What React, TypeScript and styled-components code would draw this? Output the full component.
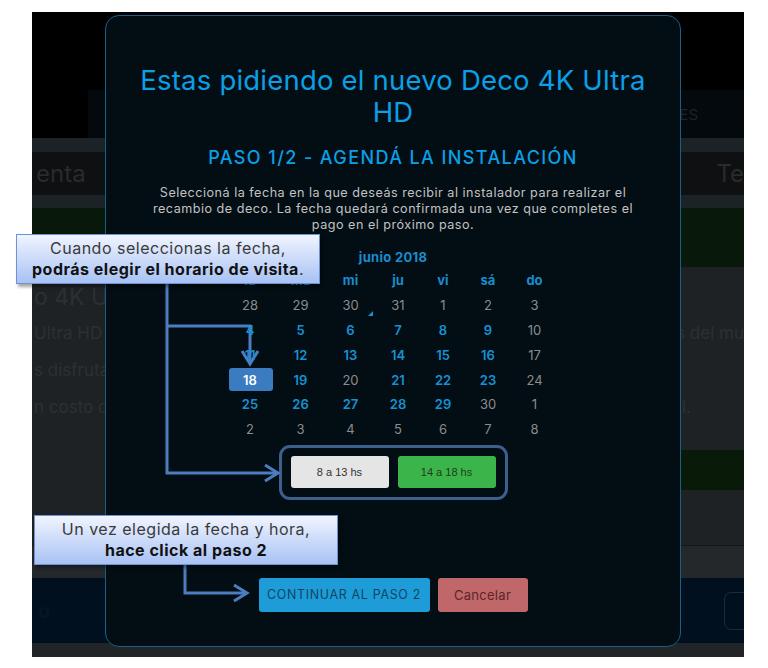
import styled, { createGlobalStyle } from "styled-components";

const GlobalStyle = createGlobalStyle`
  html, body {
    margin: 0;
    padding: 0;
    background: #ffffff;
  }
  body {
    font-family: Inter, "DejaVu Sans", sans-serif;
  }
`;

const Page = styled.div`
  position: relative;
  width: 768px;
  height: 668px;
  box-sizing: border-box;
  padding: 12px 0 0 32px;
  overflow: hidden;
  background: #ffffff;
`;

const Frame = styled.div`
  position: relative;
  width: 712px;
  height: 645px;
  display: flex;
  flex-direction: column;
  background: #000;
  overflow: hidden;
`;

const TopBar = styled.div`
  height: 78px;
  background: #000;
`;

const NavBar = styled.div`
  height: 48px;
  display: flex;
  padding-left: 56px;
  background: #000;
`;

const NavInner = styled.div`
  flex: 1;
  display: flex;
  align-items: center;
  justify-content: flex-end;
  padding-right: 46px;
  background: #03090c;
  color: #1c2326;
  font-size: 15px;
`;

const Band = styled.div<{ $h: number; $bg: string }>`
  height: ${(p) => p.$h}px;
  flex-shrink: 0;
  background: ${(p) => p.$bg};
`;

const TabBar = styled.div`
  height: 43px;
  display: flex;
  align-items: center;
  justify-content: space-between;
  padding: 0 0 0 4px;
  background: #0e1012;
  color: #282c2e;
  font-size: 24px;
  white-space: nowrap;
`;

const Promo = styled.div`
  height: 59px;
  display: flex;
  align-items: flex-end;
  padding-left: 8px;
  background: #08180a;
  color: #1b291a;
  font-size: 24px;
  font-weight: 700;
`;

const Content = styled.div`
  height: 278px;
  box-sizing: border-box;
  padding-top: 12px;
  background: #1f2225;
  color: #2c3032;
`;

const ContentLine = styled.div<{ $big?: boolean }>`
  display: flex;
  justify-content: space-between;
  height: ${(p) => (p.$big ? 36 : 37)}px;
  line-height: ${(p) => (p.$big ? 36 : 37)}px;
  font-size: ${(p) => (p.$big ? 23 : 17)}px;
  padding-left: 2px;
  white-space: nowrap;
`;

const RightText = styled.span<{ $pad: number }>`
  padding-right: ${(p) => p.$pad}px;
`;

const GreenStrip = styled.div`
  margin: 24px 0 0 auto;
  width: 320px;
  height: 40px;
  background: #0a1a08;
`;

const Footer = styled.div`
  height: 65px;
  flex-shrink: 0;
  display: flex;
  align-items: center;
  justify-content: space-between;
  padding-left: 6px;
  background: #00101f;
  color: #041526;
  font-size: 20px;
  font-weight: 700;
`;

const FooterButton = styled.div`
  width: 60px;
  height: 38px;
  margin-right: -40px;
  border: 1px solid #1c2b38;
  border-radius: 7px;
  box-sizing: border-box;
`;

const Modal = styled.div`
  position: absolute;
  left: 73px;
  top: 3px;
  width: 576px;
  height: 632px;
  box-sizing: border-box;
  padding-top: 48px;
  display: flex;
  flex-direction: column;
  align-items: center;
  background: #020e14;
  border: 1px solid #17608a;
  border-radius: 14px;
  text-align: center;
`;

const Title = styled.h1`
  margin: 0;
  font-size: 27.5px;
  line-height: 32px;
  font-weight: 400;
  letter-spacing: 0.2px;
  color: #0c9fe4;
`;

const Subtitle = styled.h2`
  margin: 18px 0 0;
  font-size: 18px;
  line-height: 24px;
  font-weight: 500;
  letter-spacing: 1.4px;
  color: #0c9fe4;
`;

const Lead = styled.p`
  margin: 15px 0 0;
  font-size: 12.6px;
  line-height: 16px;
  letter-spacing: 0.5px;
  color: #c2c2c2;
`;

const Calendar = styled.div`
  margin-top: 13px;
  display: flex;
  flex-direction: column;
  align-items: center;
`;

const MonthTitle = styled.div`
  line-height: 22px;
  font-size: 13px;
  font-weight: 700;
  letter-spacing: 0.3px;
  color: #1a8ccc;
`;

const DayGrid = styled.div`
  display: grid;
  grid-template-columns: 50px 51px 49px 46px 44px 46px 47px;
  grid-auto-rows: 24.8px;
  margin-left: -3px;
`;

const WeekDay = styled.div`
  display: flex;
  align-items: center;
  justify-content: center;
  font-size: 13px;
  font-weight: 700;
  color: #1a8ccc;
`;

type DayKind = "muted" | "active" | "selected";

const DayCell = styled.div<{ $kind: DayKind; $marker?: boolean }>`
  position: relative;
  display: flex;
  align-items: center;
  justify-content: center;
  font-size: 13px;
  font-weight: ${(p) => (p.$kind === "muted" ? 400 : 600)};
  color: ${(p) =>
    p.$kind === "muted" ? "#8c8c8c" : p.$kind === "selected" ? "#ffffff" : "#1592d4"};

  ${(p) =>
    p.$kind === "selected" &&
    `
    &::before {
      content: "";
      position: absolute;
      left: 4px;
      right: 2px;
      top: 1px;
      bottom: 1px;
      border-radius: 3px;
      background: #3b7cc0;
      z-index: 0;
    }
  `}

  ${(p) =>
    p.$marker &&
    `
    &::after {
      content: "";
      position: absolute;
      right: 2px;
      bottom: 2px;
      border-left: 5px solid transparent;
      border-bottom: 5px solid #1592d4;
    }
  `}
`;

const DayNumber = styled.span`
  position: relative;
  z-index: 1;
`;

const SlotGroup = styled.div`
  margin-top: 3px;
  display: flex;
  gap: 9px;
  padding: 8px 9px 9px;
  border: 3px solid #3d5f8e;
  border-radius: 11px;
`;

const SlotButton = styled.button<{ $picked?: boolean }>`
  width: 98px;
  height: 32px;
  border: none;
  border-radius: 3px;
  padding: 0;
  font-family: "Liberation Sans", Arial, sans-serif;
  font-size: 11px;
  color: ${(p) => (p.$picked ? "#1c3d1f" : "#333333")};
  background: ${(p) => (p.$picked ? "#3bb54a" : "#e5e5e5")};
`;

const Actions = styled.div`
  margin-top: 78px;
  display: flex;
  gap: 8px;
`;

const ActionButton = styled.button<{ $variant: "primary" | "danger" }>`
  width: ${(p) => (p.$variant === "primary" ? 171 : 90)}px;
  height: 34px;
  border: none;
  border-radius: 3px;
  padding: 0;
  font-family: Inter, "DejaVu Sans", sans-serif;
  font-size: ${(p) => (p.$variant === "primary" ? 12.4 : 13)}px;
  letter-spacing: ${(p) => (p.$variant === "primary" ? 0.7 : 0.3)}px;
  color: ${(p) => (p.$variant === "primary" ? "#0d4566" : "#5b2627")};
  background: ${(p) => (p.$variant === "primary" ? "#1e9cd7" : "#c0676a")};
`;

const Connectors = styled.svg`
  position: absolute;
  left: 0;
  top: 0;
  pointer-events: none;
`;

const Callout = styled.div<{ $left: number; $top: number }>`
  position: absolute;
  left: ${(p) => p.$left}px;
  top: ${(p) => p.$top}px;
  width: 304px;
  height: 50px;
  box-sizing: border-box;
  display: flex;
  flex-direction: column;
  align-items: center;
  justify-content: center;
  background: linear-gradient(#f0f4ff, #a8c2f4);
  border: 1px solid #6d93d6;
  box-shadow: 2px 3px 3px rgba(0, 0, 0, 0.35);
  font-size: 16px;
  line-height: 21px;
  letter-spacing: 0.5px;
  color: #3a3a3a;
  white-space: nowrap;
`;

const CalloutStrong = styled.strong`
  color: #111;
  font-weight: 700;
`;

const weekDays = ["lu", "ma", "mi", "ju", "vi", "sá", "do"];

const days: { n: number; kind: DayKind; marker?: boolean }[] = [
  { n: 28, kind: "muted" },
  { n: 29, kind: "muted" },
  { n: 30, kind: "muted", marker: true },
  { n: 31, kind: "muted" },
  { n: 1, kind: "muted" },
  { n: 2, kind: "muted" },
  { n: 3, kind: "muted" },
  ...[4, 5, 6, 7, 8, 9].map((n) => ({ n, kind: "active" as DayKind })),
  { n: 10, kind: "muted" },
  ...[11, 12, 13, 14, 15, 16].map((n) => ({ n, kind: "active" as DayKind })),
  { n: 17, kind: "muted" },
  { n: 18, kind: "selected" },
  { n: 19, kind: "active" },
  { n: 20, kind: "muted" },
  { n: 21, kind: "active" },
  { n: 22, kind: "active" },
  { n: 23, kind: "active" },
  { n: 24, kind: "muted" },
  ...[25, 26, 27, 28, 29].map((n) => ({ n, kind: "active" as DayKind })),
  { n: 30, kind: "muted" },
  { n: 1, kind: "muted" },
  ...[2, 3, 4, 5, 6, 7, 8].map((n) => ({ n, kind: "muted" as DayKind })),
];

export default function App() {
  return (
    <>
      <GlobalStyle />
      <Page>
        <Frame>
          <TopBar />
          <NavBar>
            <NavInner>ES</NavInner>
          </NavBar>
          <Band $h={14} $bg="#1c2326" />
          <TabBar>
            <span>enta</span>
            <span>Te</span>
          </TabBar>
          <Band $h={13} $bg="#1c2326" />
          <Promo>Ultra</Promo>
          <Content>
            <ContentLine $big>o 4K Ultra</ContentLine>
            <ContentLine>
              <span>Ultra HD</span>
              <span>s del mu</span>
            </ContentLine>
            <ContentLine>s disfrutar</ContentLine>
            <ContentLine>
              <span>n costo de</span>
              <RightText $pad={53}>l.</RightText>
            </ContentLine>
            <GreenStrip />
          </Content>
          <Band $h={1} $bg="#141719" />
          <Band $h={32} $bg="#25282b" />
          <Footer>
            o
            <FooterButton />
          </Footer>
          <Band $h={14} $bg="#222528" />

          <Modal>
            <Title>
              Estas pidiendo el nuevo Deco 4K Ultra
              <br />
              HD
            </Title>
            <Subtitle>PASO 1/2 - AGENDÁ LA INSTALACIÓN</Subtitle>
            <Lead>
              Seleccioná la fecha en la que deseás recibir al instalador para realizar el
              <br />
              recambio de deco. La fecha quedará confirmada una vez que completes el
              <br />
              pago en el próximo paso.
            </Lead>
            <Calendar>
              <MonthTitle>junio 2018</MonthTitle>
              <DayGrid>
                {weekDays.map((d) => (
                  <WeekDay key={d}>{d}</WeekDay>
                ))}
                {days.map((d, i) => (
                  <DayCell key={i} $kind={d.kind} $marker={d.marker}>
                    <DayNumber>{d.n}</DayNumber>
                  </DayCell>
                ))}
              </DayGrid>
            </Calendar>
            <SlotGroup>
              <SlotButton>8 a 13 hs</SlotButton>
              <SlotButton $picked>14 a 18 hs</SlotButton>
            </SlotGroup>
            <Actions>
              <ActionButton $variant="primary">CONTINUAR AL PASO 2</ActionButton>
              <ActionButton $variant="danger">Cancelar</ActionButton>
            </Actions>
          </Modal>
        </Frame>

        <Connectors width={768} height={668} viewBox="0 0 768 668">
          <g fill="none" stroke="#4d7dc1" strokeWidth={3}>
            <path d="M167 284 V473 H277" />
            <path d="M265 465 L278 473 L265 481" />
            <path d="M167 326 H250 V362" />
            <path d="M242 351 L250 364 L258 351" />
            <path d="M185 565 V593 H246" />
            <path d="M234 585 L247 593 L234 601" />
          </g>
        </Connectors>

        <Callout $left={16} $top={234}>
          <span>Cuando seleccionas la fecha,</span>
          <span>
            <CalloutStrong>podrás elegir el horario de visita</CalloutStrong>.
          </span>
        </Callout>
        <Callout $left={34} $top={515}>
          <span>Un vez elegida la fecha y hora,</span>
          <CalloutStrong>hace click al paso 2</CalloutStrong>
        </Callout>
      </Page>
    </>
  );
}
